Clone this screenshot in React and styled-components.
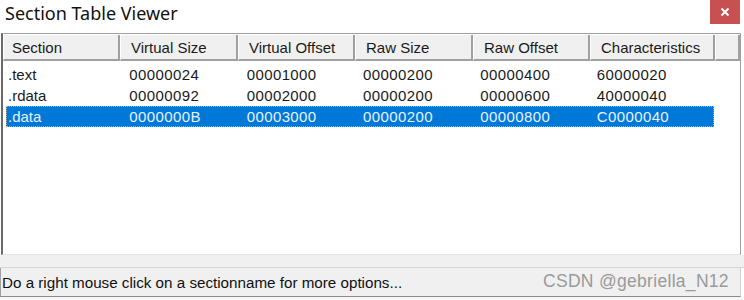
import React from "react";
import styled, { createGlobalStyle } from "styled-components";

const Global = createGlobalStyle`
  html, body { margin: 0; padding: 0; background: #ffffff; }
  #root { width: 744px; height: 300px; overflow: hidden; }
`;

const Window = styled.div`
  position: relative;
  width: 744px;
  height: 300px;
  display: flex;
  flex-direction: column;
  background: #ffffff;
  font-family: "Liberation Sans", Arial, sans-serif;
`;

const TitleBar = styled.div`
  height: 33px;
  display: flex;
  align-items: flex-start;
  justify-content: space-between;
  padding-right: 4px;
`;

const Title = styled.div`
  font-family: "Noto Sans", "Open Sans", sans-serif;
  font-size: 18px;
  color: #111;
  padding: 1px 0 0 5px;
  line-height: 24px;
`;

const Close = styled.div`
  width: 30px;
  height: 24px;
  background: #c75050;
  color: #fff;
  display: flex;
  align-items: center;
  justify-content: center;
`;

const ListFrame = styled.div`
  margin: 0 3px 0 1px;
  height: 222px;
  border-top: 1px solid #a0a0a0;
  border-left: 2px solid #696969;
  border-right: 1px solid #a0a0a0;
  border-bottom: 1px solid #e3e3e3;
  background: #ffffff;
  display: flex;
  flex-direction: column;
  box-sizing: border-box;
`;

const Header = styled.div`
  display: flex;
  height: 26px;
  background: #f0f0f0;
  border-top: 1px solid #ffffff;
`;

const HeadCell = styled.div`
  width: ${(p) => p.w}px;
  flex: ${(p) => (p.grow ? 1 : "none")};
  box-sizing: border-box;
  border-right: 2px solid #a0a0a0;
  border-left: 1px solid #ffffff;
  border-bottom: 2px solid #a0a0a0;
  font-size: 15px;
  color: #1a1a1a;
  padding-left: ${(p) => p.pl}px;
  display: flex;
  align-items: center;
`;

const Body = styled.div`
  padding: 3px 0 0 3px;
  display: flex;
  flex-direction: column;
`;

const Row = styled.div`
  display: flex;
  height: 21px;
  width: 708px;
  box-sizing: border-box;
  align-items: center;
  background: ${(p) => (p.sel ? "#0078d7" : "transparent")};
  outline: ${(p) => (p.sel ? "1px dotted #e0a060" : "none")};
  outline-offset: -1px;
  color: ${(p) => (p.sel ? "#e8f3ff" : "#1a1a1a")};
`;

const Cell = styled.div`
  width: ${(p) => p.w}px;
  box-sizing: border-box;
  padding-left: ${(p) => p.pl}px;
  font-size: 15px;
  letter-spacing: ${(p) => (p.num ? "0.4px" : "0")};
  white-space: nowrap;
`;

const Gap = styled.div`
  height: 12px;
  background: #f0f0f0;
  border-bottom: 1px solid #d4d4d4;
`;

const StatusBar = styled.div`
  height: 28px;
  background: #f0f0f0;
  border-left: 1px solid #a0a0a0;
  border-right: 1px solid #d0d0d0;
  margin-right: 3px;
  display: flex;
  align-items: center;
  padding-left: 1px;
  font-size: 15.2px;
  color: #111;
  border-bottom: 1px solid #8a8a8a;
`;

const Bottom = styled.div`
  flex: 1;
  background: #f7f7f7;
  display: flex;
`;

const Watermark = styled.div`
  position: absolute;
  left: 543px;
  top: 271px;
  font-size: 17.5px;
  color: #9a9a9a;
  letter-spacing: 0.3px;
`;

const cols = [
  { name: "Section", w: 117 },
  { name: "Virtual Size", w: 118 },
  { name: "Virtual Offset", w: 117 },
  { name: "Raw Size", w: 118 },
  { name: "Raw Offset", w: 117 },
  { name: "Characteristics", w: 125 },
];

const rows = [
  [".text", "00000024", "00001000", "00000200", "00000400", "60000020"],
  [".rdata", "00000092", "00002000", "00000200", "00000600", "40000040"],
  [".data", "0000000B", "00003000", "00000200", "00000800", "C0000040"],
];

export default function App() {
  return (
    <Window>
      <Global />
      <TitleBar>
        <Title>Section Table Viewer</Title>
        <Close>
          <svg width="10" height="10" viewBox="0 0 10 10">
            <path d="M1.5 1.5 L8.5 8.5 M8.5 1.5 L1.5 8.5" stroke="#fff" strokeWidth="2" />
          </svg>
        </Close>
      </TitleBar>
      <ListFrame>
        <Header>
          {cols.map((c, i) => (
            <HeadCell key={c.name} w={c.w} pl={i === 0 ? 8 : 10}>
              {c.name}
            </HeadCell>
          ))}
          <HeadCell grow pl={0} />
        </Header>
        <Body>
          {rows.map((r, ri) => (
            <Row key={ri} sel={ri === 2}>
              {r.map((v, ci) => (
                <Cell key={ci} w={cols[ci].w} pl={ci === 0 ? 2 : 7} num={ci > 0}>
                  {v}
                </Cell>
              ))}
            </Row>
          ))}
        </Body>
      </ListFrame>
      <Gap />
      <StatusBar>Do a right mouse click on a sectionname for more options...</StatusBar>
      <Bottom />
      <Watermark>CSDN @gebriella_N12</Watermark>
    </Window>
  );
}
